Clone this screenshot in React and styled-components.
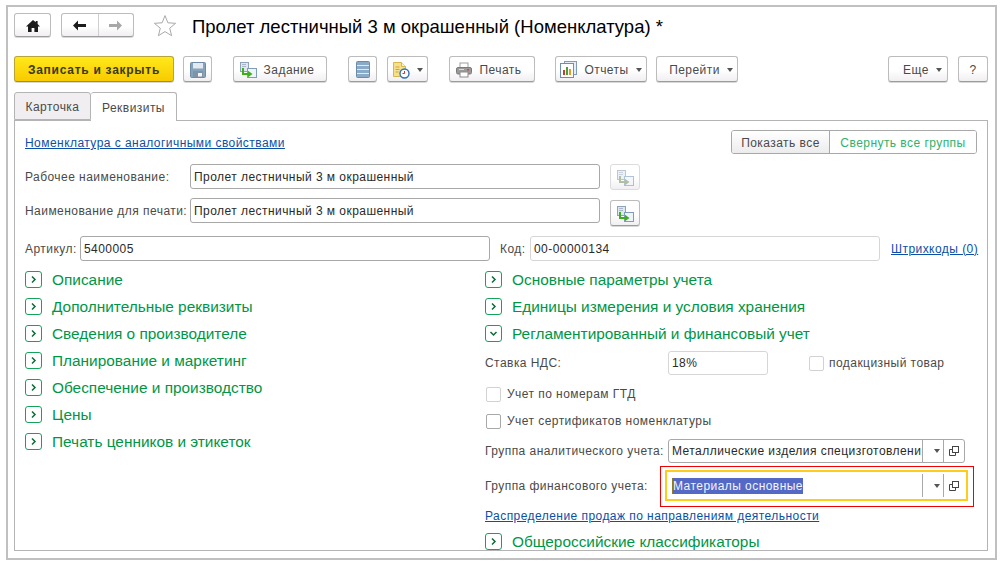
import React from "react";
import styled, { createGlobalStyle } from "styled-components";

const GlobalStyle = createGlobalStyle`
  html, body { margin: 0; padding: 0; background: #fff; }
  body { font-family: "Liberation Sans", Arial, sans-serif; font-size: 12px; color: #4a4a4a; }
  * { box-sizing: border-box; }
`;

const Page = styled.div`
  width: 1002px;
  height: 566px;
  padding: 5px 0 0 6px;
  overflow: hidden;
`;

const Frame = styled.div`
  width: 991px;
  height: 555px;
  border: 2px solid #c0c0c0;
  padding: 6px 7px 0 6px;
`;

const Header = styled.div`
  display: flex;
  align-items: center;
  height: 24px;
`;

const BaseButton = styled.div`
  display: inline-flex;
  align-items: center;
  justify-content: center;
  flex: none;
  height: ${(p) => p.$h || 26}px;
  width: ${(p) => p.$w}px;
  margin-left: ${(p) => p.$ml || 0}px;
  margin-top: ${(p) => p.$mt || 0}px;
  padding: 1px ${(p) => p.$pr || 0}px 0 ${(p) => p.$pl || 0}px;
  border: 1px solid #bcbcbc;
  border-bottom-color: #9c9c9c;
  border-radius: 3px;
  background: linear-gradient(#ffffff 55%, #f1eff1);
  box-shadow: 0 1px 0 #d8d8d8;
  color: #4a4a4a;
  letter-spacing: 0.45px;
  white-space: nowrap;
`;

const DimButton = styled(BaseButton)`
  border-color: #dcdcdc;
  box-shadow: none;
`;

const NavGroup = styled(BaseButton)`
  justify-content: flex-start;
  padding: 0;
`;

const NavCell = styled.div`
  display: flex;
  align-items: center;
  justify-content: center;
  height: 100%;
  width: 36px;
  & + & { border-left: 1px solid #cfcfcf; }
`;

const Title = styled.h1`
  margin: 3px 0 0 15px;
  font-size: 18.5px;
  font-weight: 400;
  color: #000;
  white-space: nowrap;
`;

const Toolbar = styled.div`
  display: flex;
  align-items: center;
  height: 26px;
  margin-top: 19px;
`;

const PrimaryButton = styled(BaseButton)`
  border-color: #b9a43a;
  border-bottom-color: #a68f20;
  background: linear-gradient(#ffe81a, #f8cb00);
  color: #3c3a10;
  font-weight: 700;
  letter-spacing: 0.73px;
`;

const IconSlot = styled.span`
  display: inline-flex;
  margin-left: ${(p) => p.$ml || 0}px;
  margin-right: ${(p) => p.$mr || 0}px;
`;

const Caret = styled.span`
  display: inline-block;
  flex: none;
  margin-left: ${(p) => p.$ml || 7}px;
  width: 0;
  height: 0;
  border-left: 3.5px solid transparent;
  border-right: 3.5px solid transparent;
  border-top: 4px solid #555;
`;

const Spacer = styled.div`
  flex: 1;
`;

const Tabs = styled.div`
  display: flex;
  height: 29px;
  margin-top: 10px;
  margin-bottom: -1px;
`;

const Tab = styled.div`
  position: relative;
  z-index: 1;
  display: flex;
  align-items: center;
  justify-content: center;
  width: ${(p) => p.$w}px;
  height: ${(p) => (p.$active ? 29 : 28)}px;
  padding-top: 1px;
  border: 1px solid #b4b4b4;
  border-bottom: ${(p) => (p.$active ? "none" : "1px solid #b4b4b4")};
  border-left: ${(p) => (p.$active ? "none" : "1px solid #b4b4b4")};
  border-radius: 3px 3px 0 0;
  background: ${(p) => (p.$active ? "#fff" : "#f0eef0")};
  color: #4a4a4a;
  letter-spacing: 0.45px;
`;

const Panel = styled.div`
  width: 974px;
  height: 431px;
  border: 1px solid #b4b4b4;
  padding: 9px 10px 0;
  overflow: hidden;
`;

const TopRow = styled.div`
  display: flex;
  align-items: center;
  justify-content: space-between;
  height: 24px;
`;

const LinkText = styled.a`
  color: #0b4fa8;
  text-decoration: underline;
  letter-spacing: 0.45px;
  white-space: nowrap;
`;

const TopLink = styled(LinkText)`
  margin-top: 2px;
`;

const Switch = styled.div`
  display: flex;
  height: 24px;
  border: 1px solid #a8a8a8;
  border-radius: 3px;
  overflow: hidden;
`;

const SwitchItem = styled.div`
  display: flex;
  align-items: center;
  justify-content: center;
  width: ${(p) => p.$w}px;
  padding-top: 1px;
  background: ${(p) => (p.$on ? "linear-gradient(#fff, #ececec)" : "#fff")};
  color: ${(p) => (p.$on ? "#4a4a4a" : "#2eb26c")};
  border-right: ${(p) => (p.$on ? "1px solid #a8a8a8" : "none")};
  letter-spacing: 0.45px;
`;

const FieldRow = styled.div`
  display: flex;
  align-items: flex-start;
  margin-top: ${(p) => p.$mt || 0}px;
`;

const Label = styled.label`
  display: flex;
  align-items: center;
  flex: none;
  height: 25px;
  width: ${(p) => p.$w}px;
  margin-left: ${(p) => p.$ml || 0}px;
  letter-spacing: 0.45px;
  white-space: nowrap;
`;

const Input = styled.div`
  display: flex;
  align-items: center;
  flex: none;
  width: ${(p) => p.$w}px;
  height: ${(p) => p.$h || 25}px;
  padding-left: 3px;
  border: 1px solid ${(p) => (p.$light ? "#d6d6d6" : "#a8a8a8")};
  border-radius: 3px;
  color: #2a2a2a;
  letter-spacing: 0.45px;
  white-space: nowrap;
  overflow: hidden;
`;

const Columns = styled.div`
  display: grid;
  grid-template-columns: 460px 1fr;
  margin-top: 5px;
`;

const Column = styled.div`
  display: flex;
  flex-direction: column;
`;

const GroupRow = styled.div`
  display: flex;
  align-items: center;
  flex: none;
  height: 27px;
  margin-top: ${(p) => p.$mt || 0}px;
  color: #009646;
  font-size: 15.4px;
  white-space: nowrap;
`;

const GroupMark = styled.span`
  display: flex;
  align-items: center;
  justify-content: center;
  flex: none;
  width: 17px;
  height: 17px;
  margin-right: 10px;
  border: 1px solid #15a35c;
  border-radius: 3px;
`;

const OptionRow = styled.div`
  display: flex;
  align-items: center;
  flex: none;
  height: ${(p) => p.$h || 24}px;
  margin-top: ${(p) => p.$mt || 0}px;
  letter-spacing: 0.45px;
  white-space: nowrap;
`;

const OptionLabel = styled.span`
  flex: none;
  width: ${(p) => p.$w}px;
`;

const Check = styled.span`
  display: inline-block;
  flex: none;
  width: 15px;
  height: 15px;
  margin-left: ${(p) => p.$ml || 1}px;
  margin-right: ${(p) => p.$mr || 6}px;
  border: 1px solid ${(p) => (p.$dim ? "#d2d2d2" : "#a8a8a8")};
  border-radius: 2px;
  background: #fff;
`;

const Combo = styled.div`
  display: flex;
  align-items: center;
  flex: none;
  width: ${(p) => p.$w}px;
  height: 24px;
  border: 1px solid #a8a8a8;
  border-radius: 3px;
  color: #2a2a2a;
`;

const FocusCombo = styled(Combo)`
  position: relative;
  height: 31px;
  padding-right: 2px;
  border: 2px solid #ffcc1a;
  border-radius: 0;

  &::before {
    content: "";
    position: absolute;
    inset: -6px -8px -8px -7px;
    border: 1px solid #f00000;
    pointer-events: none;
  }
`;

const ComboText = styled.div`
  flex: 1;
  min-width: 0;
  padding-left: ${(p) => p.$pl || 3}px;
  letter-spacing: 0.45px;
  white-space: nowrap;
  overflow: hidden;
`;

const Selected = styled.span`
  display: inline-block;
  height: 16px;
  line-height: 16px;
  background: #5369c5;
  color: #f4f4ff;
  border-left: 1px solid #8d7a2a;
`;

const ComboCell = styled.div`
  display: flex;
  align-items: center;
  justify-content: center;
  flex: none;
  width: 21px;
  height: ${(p) => p.$h || 22}px;
  border-left: 1px solid #a8a8a8;
`;

const Home = () => (
  <svg width="16" height="14" viewBox="0 0 16 14">
    <path d="M8 1 1 7.4h2V13h3.6V9h2.8v4H13V7.4h2L12.6 5V2h-1.8v1.3z" fill="#1c1c1c" />
  </svg>
);

const Arrow = ({ left, color }) => (
  <svg width="15" height="11" viewBox="0 0 15 11">
    <path d={left ? "M6 .5 1 5.5l5 5V7h8V4H6z" : "M9 .5l5 5-5 5V7H1V4h8z"} fill={color} />
  </svg>
);

const Star = () => (
  <svg width="24" height="23" viewBox="0 0 24 23">
    <path
      d="M12 1.6l2.9 7.2 7.7.5-5.9 4.9 1.9 7.5-6.6-4.1-6.6 4.1 1.9-7.5-5.9-4.9 7.7-.5z"
      fill="#fff"
      stroke="#a9a9a9"
    />
  </svg>
);

const Floppy = () => (
  <svg width="16" height="16" viewBox="0 0 16 16">
    <rect x="0.5" y="0.5" width="15" height="15" rx="1" fill="#86a3bc" stroke="#6f8ca6" />
    <rect x="3" y="1" width="10" height="5.5" fill="#e2e9f0" />
    <rect x="3" y="9" width="10" height="6" fill="#7f93a6" />
    <rect x="8" y="11" width="4" height="3.5" fill="#f4f4f4" />
  </svg>
);

const MoveDocs = ({ dim }) => (
  <svg width="17" height="16" viewBox="0 0 17 16" opacity={dim ? 0.6 : 1}>
    <rect x="0.5" y="0.5" width="8" height="9" fill="#dfe8f2" stroke="#8fa3b8" />
    <rect x="2" y="2" width="4" height="1" fill="#a8b8c8" />
    <rect x="2" y="4" width="4" height="1" fill="#a8b8c8" />
    <rect x="7.5" y="6.5" width="9" height="9" fill="#eef4fa" stroke="#7f9cb8" />
    <path d="M4 6v5h4V8.700l4.500 3.300-4.500 3.300V13H2V6z" fill={dim ? "#7d9a6a" : "#3fae1f"} />
  </svg>
);

const Stack = () => (
  <svg width="14" height="17" viewBox="0 0 14 17">
    <rect x="0.5" y="0.5" width="13" height="16" rx="1" fill="#8aabc7" stroke="#6b8ca9" />
    <path d="M1 4.500h12M1 8.500h12M1 12.500h12" stroke="#dfe9f1" />
  </svg>
);

const ClockDoc = () => (
  <svg width="17" height="18" viewBox="0 0 17 18">
    <path d="M.5 1.500h8l4 4v10H.5z" fill="#f7e08c" stroke="#d7b64e" />
    <path d="M8.500 1.500v4h4" fill="#fff4c4" stroke="#d7b64e" />
    <path d="M2.500 6h4M2.500 8.500h4M2.500 11h3" stroke="#c9a63f" />
    <circle cx="11.500" cy="12.500" r="4.500" fill="#fff" stroke="#2f6fb5" strokeWidth="1.400" />
    <path d="M11.500 10v2.500h-2" stroke="#c8332b" fill="none" />
  </svg>
);

const Printer = () => (
  <svg width="16" height="16" viewBox="0 0 16 16">
    <rect x="4" y="1" width="8" height="5" fill="#fff" stroke="#9d9d9d" />
    <rect x="0.500" y="5.500" width="15" height="6.500" rx="1.500" fill="#9a9a9a" stroke="#7b7b7b" />
    <rect x="4" y="10" width="8" height="5" fill="#fff" stroke="#8b8b8b" />
    <rect x="11" y="7" width="2" height="1.500" fill="#d9453c" />
    <rect x="3" y="7" width="5" height="1" fill="#d8d8d8" />
  </svg>
);

const Reports = () => (
  <svg width="17" height="17" viewBox="0 0 17 17">
    <rect x="4.500" y="0.500" width="12" height="13" fill="#e5edf6" stroke="#7e9cbc" />
    <rect x="0.500" y="2.500" width="13" height="14" fill="#fff" stroke="#6d8fb4" />
    <rect x="3" y="9" width="2" height="5" fill="#d2382f" />
    <rect x="6" y="6" width="2" height="8" fill="#3fa535" />
    <rect x="9" y="8" width="2" height="6" fill="#e99a22" />
  </svg>
);

const Chevron = ({ down }) => (
  <svg width="9" height="9" viewBox="0 0 9 9">
    <path
      d={down ? "M1.500 3 4.500 6l3-3" : "M3 1.500 6 4.500l-3 3"}
      fill="none"
      stroke="#0c6b3a"
      strokeWidth="1.500"
    />
  </svg>
);

const OpenIcon = () => (
  <svg width="10" height="10" viewBox="0 0 10 10">
    <rect x="3.500" y="0.500" width="6" height="6" fill="none" stroke="#444" />
    <path d="M3 3.500H.5v6h6V7" fill="none" stroke="#444" />
  </svg>
);

const Group = ({ title, down, mt }) => (
  <GroupRow $mt={mt}>
    <GroupMark>
      <Chevron down={down} />
    </GroupMark>
    {title}
  </GroupRow>
);

const leftGroups = [
  "Описание",
  "Дополнительные реквизиты",
  "Сведения о производителе",
  "Планирование и маркетинг",
  "Обеспечение и производство",
  "Цены",
  "Печать ценников и этикеток",
];

export default function App() {
  return (
    <Page>
      <GlobalStyle />
      <Frame>
        <Header>
          <BaseButton $w={37} $h={24}>
            <Home />
          </BaseButton>
          <NavGroup $w={73} $h={24} $ml={10}>
            <NavCell>
              <Arrow left color="#1c1c1c" />
            </NavCell>
            <NavCell>
              <Arrow color="#a8a8a8" />
            </NavCell>
          </NavGroup>
          <IconSlot $ml={19}>
            <Star />
          </IconSlot>
          <Title>Пролет лестничный 3 м окрашенный (Номенклатура) *</Title>
        </Header>

        <Toolbar>
          <PrimaryButton $w={160}>Записать и закрыть</PrimaryButton>
          <BaseButton $w={29} $ml={9}>
            <Floppy />
          </BaseButton>
          <BaseButton $w={94} $ml={21} $pr={6}>
            <IconSlot $mr={7}>
              <MoveDocs />
            </IconSlot>
            Задание
          </BaseButton>
          <BaseButton $w={29} $ml={21}>
            <Stack />
          </BaseButton>
          <BaseButton $w={41} $ml={10}>
            <ClockDoc />
            <Caret />
          </BaseButton>
          <BaseButton $w={86} $ml={21} $pr={6}>
            <IconSlot $mr={7}>
              <Printer />
            </IconSlot>
            Печать
          </BaseButton>
          <BaseButton $w={92} $ml={20}>
            <IconSlot $mr={7}>
              <Reports />
            </IconSlot>
            Отчеты
            <Caret />
          </BaseButton>
          <BaseButton $w={82} $ml={9} $pl={8}>
            Перейти
            <Caret />
          </BaseButton>
          <Spacer />
          <BaseButton $w={60} $pl={9}>
            Еще
            <Caret />
          </BaseButton>
          <BaseButton $w={30} $ml={10}>
            ?
          </BaseButton>
        </Toolbar>

        <Tabs>
          <Tab $w={77}>Карточка</Tab>
          <Tab $w={86} $active>
            Реквизиты
          </Tab>
        </Tabs>

        <Panel>
          <TopRow>
            <TopLink>Номенклатура с аналогичными свойствами</TopLink>
            <Switch>
              <SwitchItem $w={98} $on>
                Показать все
              </SwitchItem>
              <SwitchItem $w={146}>Свернуть все группы</SwitchItem>
            </Switch>
          </TopRow>

          <FieldRow $mt={10}>
            <Label $w={165}>Рабочее наименование:</Label>
            <Input $w={410}>Пролет лестничный 3 м окрашенный</Input>
            <DimButton $w={30} $ml={10}>
              <MoveDocs dim />
            </DimButton>
          </FieldRow>
          <FieldRow $mt={8}>
            <Label $w={165}>Наименование для печати:</Label>
            <Input $w={410}>Пролет лестничный 3 м окрашенный</Input>
            <BaseButton $w={30} $ml={10} $mt={2}>
              <MoveDocs />
            </BaseButton>
          </FieldRow>
          <FieldRow $mt={10}>
            <Label $w={55}>Артикул:</Label>
            <Input $w={410}>5400005</Input>
            <Label $w={30} $ml={10}>
              Код:
            </Label>
            <Input $w={350} $light>
              00-00000134
            </Input>
            <Label $w={86} $ml={11}>
              <LinkText>Штрихкоды (0)</LinkText>
            </Label>
          </FieldRow>

          <Columns>
            <Column>
              {leftGroups.map((title) => (
                <Group key={title} title={title} />
              ))}
            </Column>
            <Column>
              <Group title="Основные параметры учета" />
              <Group title="Единицы измерения и условия хранения" />
              <Group title="Регламентированный и финансовый учет" down />
              <OptionRow $mt={4}>
                <OptionLabel $w={183}>Ставка НДС:</OptionLabel>
                <Input $w={100} $h={24} $light>
                  18%
                </Input>
                <Check $ml={41} $mr={5} $dim />
                подакцизный товар
              </OptionRow>
              <OptionRow $mt={7}>
                <Check $dim />
                Учет по номерам ГТД
              </OptionRow>
              <OptionRow $mt={3}>
                <Check />
                Учет сертификатов номенклатуры
              </OptionRow>
              <OptionRow $mt={6}>
                <OptionLabel $w={183}>Группа аналитического учета:</OptionLabel>
                <Combo $w={297}>
                  <ComboText>Металлические изделия специзготовлени</ComboText>
                  <ComboCell>
                    <Caret $ml={0} />
                  </ComboCell>
                  <ComboCell>
                    <OpenIcon />
                  </ComboCell>
                </Combo>
              </OptionRow>
              <OptionRow $mt={7} $h={31}>
                <OptionLabel $w={180}>Группа финансового учета:</OptionLabel>
                <FocusCombo $w={303}>
                  <ComboText $pl={5}>
                    <Selected>Материалы основные</Selected>
                  </ComboText>
                  <ComboCell $h={23}>
                    <Caret $ml={0} />
                  </ComboCell>
                  <ComboCell $h={23}>
                    <OpenIcon />
                  </ComboCell>
                </FocusCombo>
              </OptionRow>
              <OptionRow $mt={6} $h={18}>
                <LinkText>Распределение продаж по направлениям деятельности</LinkText>
              </OptionRow>
              <Group title="Общероссийские классификаторы" mt={3} />
            </Column>
          </Columns>
        </Panel>
      </Frame>
    </Page>
  );
}
